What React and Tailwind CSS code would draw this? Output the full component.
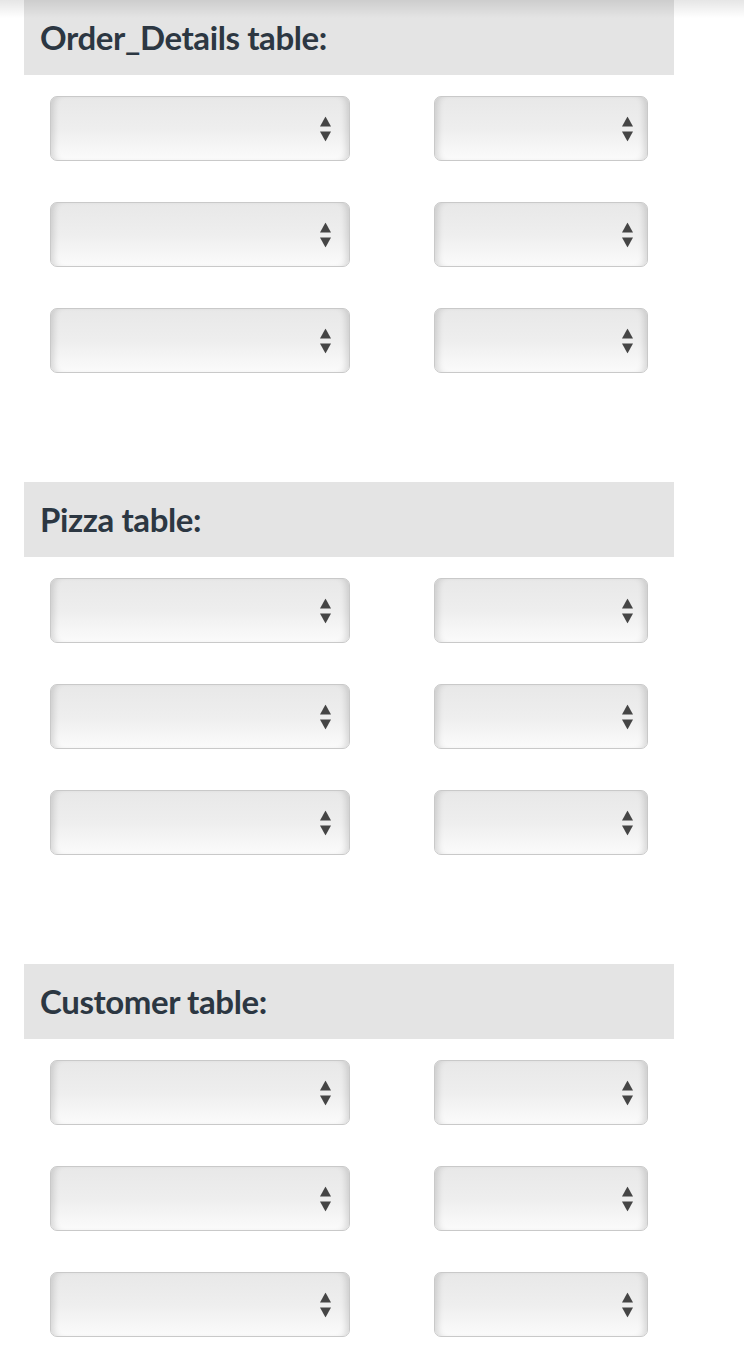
import React from 'react';

const sections = ['Order_Details table:', 'Pizza table:', 'Customer table:'];

const Arrows = ({ wide }) => (
  <svg
    width="11"
    height="25"
    viewBox="0 0 11 25"
    className={`absolute top-1/2 -translate-y-1/2 ${wide ? 'right-[18px]' : 'right-[14px]'}`}
  >
    <path d="M5.5 0 L11 10 L0 10 Z" fill="#454545" />
    <path d="M0 15 L11 15 L5.5 25 Z" fill="#454545" />
  </svg>
);

const Select = ({ wide }) => (
  <div
    className={`relative h-[65px] rounded-[7px] border border-[#c9c9c9] bg-gradient-to-b from-[#e8e8e8] via-[#eeeeee] to-[#fbfbfb] shadow-[inset_7px_0_6px_-4px_rgba(0,0,0,0.13),inset_-7px_0_6px_-4px_rgba(0,0,0,0.13)] ${wide ? 'w-[300px]' : 'w-[214px]'}`}
  >
    <Arrows wide={wide} />
  </div>
);

const Section = ({ title }) => (
  <div className="mb-[109px]">
    <div className="w-[650px] h-[75px] bg-[#e4e4e4] flex items-center pl-4">
      <h2 className="text-[33px] font-bold text-[#2c3742] tracking-[-0.4px]">{title}</h2>
    </div>
    <div className="flex flex-col gap-[41px] pt-[21px] pl-[26px]">
      {[0, 1, 2].map(i => (
        <div key={i} className="flex gap-[84px]">
          <Select wide />
          <Select />
        </div>
      ))}
    </div>
  </div>
);

export default function App() {
  return (
    <div className="relative min-h-[1366px] bg-white pl-6" style={{ fontFamily: 'Lato, "Noto Sans", sans-serif' }}>
      <div className="absolute top-0 left-0 right-0 h-[18px] bg-gradient-to-b from-black/10 to-transparent pointer-events-none z-10" />
      {sections.map(s => <Section key={s} title={s} />)}
    </div>
  );
}
